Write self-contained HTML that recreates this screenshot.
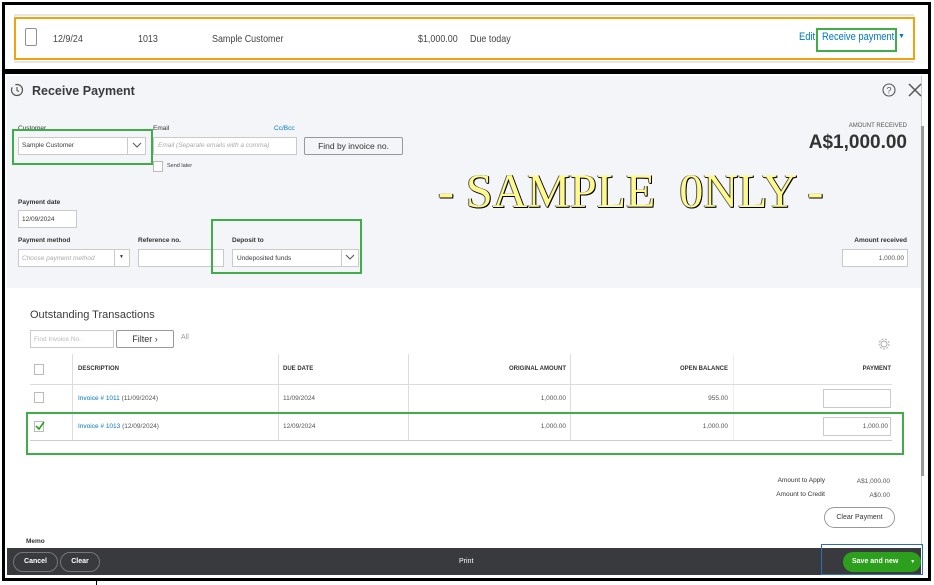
<!DOCTYPE html>
<html><head><style>
*{margin:0;padding:0;box-sizing:border-box}
body{width:934px;height:585px;background:#fff;position:relative;font-family:"Liberation Sans",sans-serif;overflow:hidden;color:#393a3d}
.a{position:absolute}
.t{font-size:8px;white-space:nowrap}
.sc{transform:scaleX(0.85);transform-origin:left center}
.lbl{font-size:6.5px;color:#333;font-weight:bold;position:absolute;white-space:nowrap}
.inp{position:absolute;background:#fff;border:1px solid #c9cacc}
.ph{font-size:6.5px;color:#aaa;font-style:italic;position:absolute;white-space:nowrap}
.g{position:absolute;border:2px solid #3fae49}
.th{font-size:6px;font-weight:bold;color:#333;position:absolute;white-space:nowrap}
.td{font-size:6.5px;color:#555;position:absolute;white-space:nowrap}
.lnk{color:#0077c5}
</style></head><body>
<!-- top frame -->
<div class="a" style="left:2px;top:2px;width:929px;height:69px;border:3px solid #000;border-bottom:2px solid #000"></div>
<div class="a" style="left:14px;top:14px;width:900px;height:2px;background:#e6e6e6"></div>
<div class="a" style="left:14px;top:17px;width:901px;height:43px;border:2px solid #f0a30a;background:#fff"></div>
<div class="a" style="left:25px;top:28px;width:12px;height:18px;border:1px solid #8d9096;border-radius:2px"></div>
<div class="a t sc" style="left:53px;top:33px;font-size:10.5px;color:#444">12/9/24</div>
<div class="a t sc" style="left:138px;top:33px;font-size:10.5px;color:#444">1013</div>
<div class="a t sc" style="left:212px;top:33px;font-size:10.5px;color:#444">Sample Customer</div>
<div class="a t sc" style="left:418px;top:33px;font-size:10.5px;color:#444">$1,000.00</div>
<div class="a t sc" style="left:470px;top:33px;font-size:10.5px;color:#444">Due today</div>
<div class="a t lnk sc" style="left:799px;top:31px;font-size:11px">Edit</div>
<div class="g" style="left:816px;top:28px;width:81px;height:24px"></div>
<div class="a t lnk sc" style="left:822px;top:31px;font-size:11px">Receive payment</div>
<div class="a t lnk" style="left:898px;top:33px;font-size:7px">▼</div>
<div class="a" style="left:14px;top:61px;width:900px;height:2px;background:#e6e6e6"></div>
<!-- main frame -->
<div class="a" style="left:2px;top:71px;width:929px;height:510px;border:3px solid #000"></div>
<div class="a" style="left:7px;top:76px;width:914px;height:212px;background:#f4f5f8"></div>
<div class="a" style="left:921px;top:76px;width:5px;height:470px;background:#fff;border-left:1px solid #ccc"></div>
<div class="a" style="left:921px;top:126px;width:3px;height:350px;background:#999"></div>
<svg class="a" style="left:10px;top:83px" width="14" height="14" viewBox="0 0 14 14"><circle cx="7" cy="7" r="5.5" fill="none" stroke="#555" stroke-width="1.2" stroke-dasharray="20 4"/><path d="M7 4v3.5l2 1" stroke="#555" fill="none" stroke-width="1.1"/></svg>
<div class="a" style="left:32px;top:84px;font-size:12.5px;font-weight:bold;color:#393a3d">Receive Payment</div>
<svg class="a" style="left:882px;top:83px" width="14" height="14"><circle cx="7" cy="7" r="6" fill="none" stroke="#555" stroke-width="1.1"/><text x="7" y="10.5" font-size="9" text-anchor="middle" fill="#555" font-family="Liberation Sans">?</text></svg>
<svg class="a" style="left:908px;top:83px" width="14" height="14"><path d="M1 1L13 13M13 1L1 13" stroke="#555" stroke-width="1.5"/></svg>
<!-- customer -->
<div class="lbl" style="left:18px;top:125px;font-weight:normal">Customer</div>
<div class="inp" style="left:18px;top:137px;width:128px;height:18px"></div>
<div class="a" style="left:127px;top:137px;width:1px;height:18px;background:#c9cacc"></div>
<div class="a t" style="left:22px;top:142px;font-size:6.5px">Sample Customer</div>
<svg class="a" style="left:132px;top:142px" width="10" height="7"><path d="M1 1l4 4 4-4" stroke="#555" fill="none"/></svg>
<div class="g" style="left:12px;top:129px;width:141px;height:36px"></div>
<div class="lbl" style="left:153px;top:125px;font-weight:normal">Email</div>
<div class="lbl lnk" style="left:274px;top:125px;font-weight:normal">Cc/Bcc</div>
<div class="inp" style="left:153px;top:137px;width:144px;height:18px"></div>
<div class="ph" style="left:158px;top:142px">Email (Separate emails with a comma)</div>
<div class="a" style="left:153px;top:161px;width:10px;height:11px;border:1px solid #bbb;background:#fff"></div>
<div class="a t" style="left:167px;top:163px;font-size:5.5px">Send later</div>
<div class="a" style="left:304px;top:137px;width:99px;height:18px;border:1px solid #999;background:#f4f5f8;border-radius:2px;font-size:8.5px;text-align:center;line-height:16px;color:#333">Find by invoice no.</div>
<div class="a t" style="right:27px;top:123px;font-size:6px;color:#555">AMOUNT RECEIVED</div>
<div class="a t" style="right:27px;top:132px;font-size:19px;font-weight:bold;color:#333">A$1,000.00</div>
<div class="a t" style="left:438px;top:164px;font-family:'Liberation Serif',serif;font-size:48px;color:#fdf98c;text-shadow:1px 1px 0 #000,-1px 0 0 #555,0 1px 0 #000,1px 0 0 #000">- SAMPLE &nbsp;0NLY -</div>
<div class="lbl" style="left:18px;top:199px">Payment date</div>
<div class="inp" style="left:18px;top:210px;width:59px;height:18px"></div>
<div class="a t" style="left:22px;top:216px;font-size:6.5px">12/09/2024</div>
<div class="lbl" style="left:18px;top:237px">Payment method</div>
<div class="inp" style="left:18px;top:249px;width:112px;height:18px"></div>
<div class="a" style="left:114px;top:249px;width:1px;height:18px;background:#c9cacc"></div>
<div class="ph" style="left:22px;top:255px">Choose payment method</div>
<div class="a t" style="left:119px;top:254px;font-size:5px">▼</div>
<div class="lbl" style="left:138px;top:237px">Reference no.</div>
<div class="inp" style="left:138px;top:249px;width:86px;height:18px"></div>
<div class="g" style="left:211px;top:219px;width:151px;height:55px"></div>
<div class="lbl" style="left:232px;top:237px">Deposit to</div>
<div class="inp" style="left:232px;top:249px;width:127px;height:18px"></div>
<div class="a" style="left:341px;top:249px;width:1px;height:18px;background:#c9cacc"></div>
<div class="a t" style="left:237px;top:255px;font-size:6.5px">Undeposited funds</div>
<svg class="a" style="left:345px;top:254px" width="10" height="7"><path d="M1 1l4 4 4-4" stroke="#555" fill="none"/></svg>
<div class="lbl" style="right:27px;top:237px">Amount received</div>
<div class="inp" style="left:842px;top:249px;width:66px;height:18px"></div>
<div class="a t" style="right:30px;top:255px;font-size:6.5px;color:#555">1,000.00</div>
<!-- outstanding -->
<div class="a t" style="left:30px;top:309px;font-size:11px;color:#393a3d">Outstanding Transactions</div>
<div class="inp" style="left:30px;top:330px;width:84px;height:18px"></div>
<div class="ph" style="left:34px;top:336px;font-style:normal;color:#bbb">Find Invoice No.</div>
<div class="a" style="left:116px;top:330px;width:58px;height:18px;border:1px solid #999;border-radius:2px;font-size:9px;text-align:center;line-height:16px;color:#333">Filter ›</div>
<div class="a t" style="left:181px;top:334px;font-size:7px;color:#999">All</div>
<svg class="a" style="left:878px;top:338px" width="12" height="12"><circle cx="6" cy="6" r="3" fill="none" stroke="#aaa"/><circle cx="6" cy="6" r="5" fill="none" stroke="#aaa" stroke-dasharray="2 1.5"/></svg>
<div class="a" style="left:72px;top:354px;width:1px;height:86px;background:#ddd"></div>
<div class="a" style="left:278px;top:354px;width:1px;height:86px;background:#ddd"></div>
<div class="a" style="left:408px;top:354px;width:1px;height:86px;background:#ddd"></div>
<div class="a" style="left:570px;top:354px;width:1px;height:86px;background:#ddd"></div>
<div class="a" style="left:733px;top:354px;width:1px;height:86px;background:#eee"></div>
<div class="a" style="left:34px;top:364px;width:10px;height:11px;border:1px solid #bbb"></div>
<div class="th" style="left:78px;top:366px">DESCRIPTION</div>
<div class="th" style="left:283px;top:366px">DUE DATE</div>
<div class="th" style="right:368px;top:366px">ORIGINAL AMOUNT</div>
<div class="th" style="right:206px;top:366px">OPEN BALANCE</div>
<div class="th" style="right:43px;top:366px">PAYMENT</div>
<div class="a" style="left:30px;top:384px;width:862px;height:1px;background:#ddd"></div>
<div class="a" style="left:34px;top:392px;width:10px;height:11px;border:1px solid #bbb"></div>
<div class="td" style="left:78px;top:395px"><span class="lnk">Invoice # 1011</span> (11/09/2024)</div>
<div class="td" style="left:283px;top:395px">11/09/2024</div>
<div class="td" style="right:368px;top:395px">1,000.00</div>
<div class="td" style="right:206px;top:395px">955.00</div>
<div class="inp" style="left:823px;top:389px;width:68px;height:19px"></div>
<div class="a" style="left:34px;top:421px;width:10px;height:11px;border:1px solid #bbb"></div>
<svg class="a" style="left:35px;top:421px" width="10" height="10"><path d="M1 5l3 3 5-7" stroke="#2ca01c" stroke-width="1.6" fill="none"/></svg>
<div class="td" style="left:78px;top:423px"><span class="lnk">Invoice # 1013</span> (12/09/2024)</div>
<div class="td" style="left:283px;top:423px">12/09/2024</div>
<div class="td" style="right:368px;top:423px">1,000.00</div>
<div class="td" style="right:206px;top:423px">1,000.00</div>
<div class="inp" style="left:823px;top:417px;width:68px;height:19px"></div>
<div class="td" style="right:46px;top:423px">1,000.00</div>
<div class="a" style="left:30px;top:440px;width:862px;height:1px;background:#ccc"></div>
<div class="g" style="left:26px;top:412px;width:878px;height:43px"></div>
<div class="lbl" style="right:109px;top:477px;font-weight:normal;color:#333">Amount to Apply</div>
<div class="td" style="right:44px;top:478px">A$1,000.00</div>
<div class="lbl" style="right:109px;top:491px;font-weight:normal;color:#333">Amount to Credit</div>
<div class="td" style="right:44px;top:492px">A$0.00</div>
<div class="a" style="left:824px;top:507px;width:71px;height:21px;border:1px solid #999;border-radius:11px;font-size:7px;text-align:center;line-height:19px;color:#333">Clear Payment</div>
<div class="lbl" style="left:26px;top:538px">Memo</div>
<!-- footer -->
<div class="a" style="left:7px;top:548px;width:914px;height:27px;background:#393a3d"></div>
<div class="a" style="left:13px;top:552px;width:45px;height:20px;border:1px solid #777;border-radius:10px;color:#fff;font-size:7px;font-weight:bold;text-align:center;line-height:18px">Cancel</div>
<div class="a" style="left:60px;top:552px;width:40px;height:20px;border:1px solid #777;border-radius:10px;color:#fff;font-size:7px;font-weight:bold;text-align:center;line-height:18px">Clear</div>
<div class="a t" style="left:459px;top:558px;color:#fff;font-size:7px">Print</div>
<div class="a" style="left:821px;top:544px;width:102px;height:31px;border:1px solid #2d6bc4"></div>
<div class="a" style="left:843px;top:552px;width:78px;height:20px;background:#2ca01c;border-radius:10px;color:#fff;font-size:7px;font-weight:bold;line-height:20px;padding-left:9px">Save and new <span style="margin-left:10px;font-size:5px">▼</span></div>
<div class="a" style="left:96px;top:578px;width:1px;height:7px;background:#000"></div>
</body></html>
